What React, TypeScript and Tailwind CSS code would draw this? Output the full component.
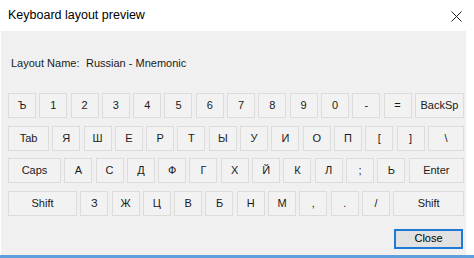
const rows: { first?: [string, string]; keys: string[]; last?: string }[] = [
    { keys: ["Ъ", "1", "2", "3", "4", "5", "6", "7", "8", "9", "0", "-", "="], last: "BackSp" },
    { first: ["Tab", "w-[41px]"], keys: ["Я", "Ш", "Е", "Р", "Т", "Ы", "У", "И", "О", "П", "[", "]"], last: "\\" },
    { first: ["Caps", "w-[53px]"], keys: ["А", "С", "Д", "Ф", "Г", "Х", "Й", "К", "Л", ";", "Ь"], last: "Enter" },
    { first: ["Shift", "w-[69px]"], keys: ["З", "Ж", "Ц", "В", "Б", "Н", "М", ",", ".", "/"], last: "Shift" },
];

const keyClass =
    "h-[25px] flex items-center justify-center border border-[#dcdcdc] bg-[#f2f2f2] text-[11px] text-[#1a1a1a]";

const App = () => {
    return (
        <div
            className="w-[474px] h-[258px] bg-white flex flex-col overflow-hidden"
            style={{ fontFamily: '"Liberation Sans", Arial, sans-serif' }}
        >
            {/* title bar */}
            <div className="h-[31px] flex items-center justify-between pl-[8px] pr-[12px]">
                <span className="text-[12.5px] text-black">Keyboard layout preview</span>
                <svg width="11" height="11" viewBox="0 0 11 11" className="mt-[1px]">
                    <path d="M0.5 0.5 L10.5 10.5 M10.5 0.5 L0.5 10.5" stroke="#222" strokeWidth="1" fill="none" />
                </svg>
            </div>

            <div className="flex-1 flex">
                <div className="ml-[1px] w-[465px] bg-[#f0f0f0] pl-[7px] pt-[25px] flex flex-col">
                    <div className="flex items-center h-[14px] pl-[3px] text-[11px] text-[#1a1a1a]">
                        <span className="w-[75px]">Layout Name:</span>
                        <span>Russian - Mnemonic</span>
                    </div>

                    <div className="mt-[23px] w-[456px] flex flex-col gap-[7.5px]">
                        {rows.map((row, i) => (
                            <div key={i} className="flex gap-[3.3px]">
                                {row.first && <div className={`${keyClass} ${row.first[1]}`}>{row.first[0]}</div>}
                                {row.keys.map((k, j) => (
                                    <div key={j} className={`${keyClass} w-[28px]`}>
                                        {k}
                                    </div>
                                ))}
                                {row.last && <div className={`${keyClass} flex-1`}>{row.last}</div>}
                            </div>
                        ))}
                    </div>

                    <div className="w-[456px] flex justify-end mt-[13px]">
                        <button className="w-[69px] h-[20px] mr-[1px] border-2 border-[#1f7ad6] bg-[#e1e1e1] text-[11px] text-black flex items-center justify-center">
                            Close
                        </button>
                    </div>
                </div>
            </div>

            <div className="h-[3px] bg-[#5f9fdc]" />
        </div>
    );
};

export default App;
